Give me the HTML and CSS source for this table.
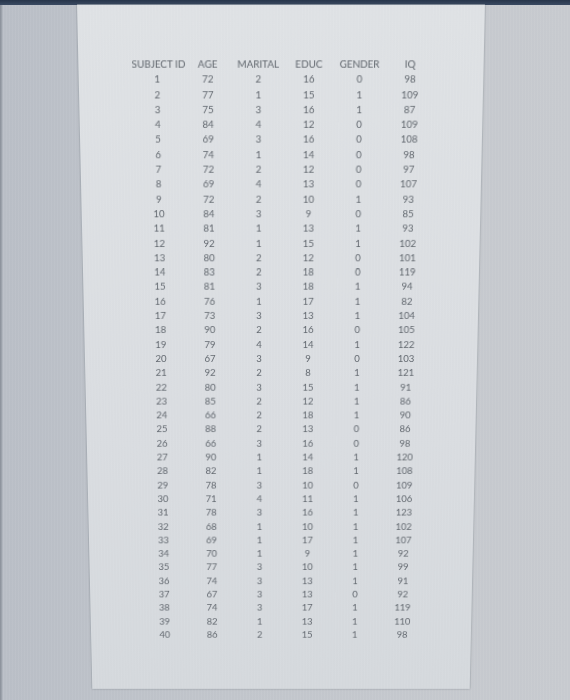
FILE: index.html
```html
<!DOCTYPE html>
<html lang="en">
<head>
<meta charset="utf-8">
<title>Subject data</title>
<link rel="stylesheet" href="styles.css">
</head>
<body>
<div class="topbar"></div>
<div class="stage">
  <div class="page">
    <div class="sheet">
      <div class="row head"><span>SUBJECT ID</span><span>AGE</span><span>MARITAL</span><span>EDUC</span><span>GENDER</span><span>IQ</span></div>
      <div class="row"><span>1</span><span>72</span><span>2</span><span>16</span><span>0</span><span>98</span></div>
      <div class="row"><span>2</span><span>77</span><span>1</span><span>15</span><span>1</span><span>109</span></div>
      <div class="row"><span>3</span><span>75</span><span>3</span><span>16</span><span>1</span><span>87</span></div>
      <div class="row"><span>4</span><span>84</span><span>4</span><span>12</span><span>0</span><span>109</span></div>
      <div class="row"><span>5</span><span>69</span><span>3</span><span>16</span><span>0</span><span>108</span></div>
      <div class="row"><span>6</span><span>74</span><span>1</span><span>14</span><span>0</span><span>98</span></div>
      <div class="row"><span>7</span><span>72</span><span>2</span><span>12</span><span>0</span><span>97</span></div>
      <div class="row"><span>8</span><span>69</span><span>4</span><span>13</span><span>0</span><span>107</span></div>
      <div class="row"><span>9</span><span>72</span><span>2</span><span>10</span><span>1</span><span>93</span></div>
      <div class="row"><span>10</span><span>84</span><span>3</span><span>9</span><span>0</span><span>85</span></div>
      <div class="row"><span>11</span><span>81</span><span>1</span><span>13</span><span>1</span><span>93</span></div>
      <div class="row"><span>12</span><span>92</span><span>1</span><span>15</span><span>1</span><span>102</span></div>
      <div class="row"><span>13</span><span>80</span><span>2</span><span>12</span><span>0</span><span>101</span></div>
      <div class="row"><span>14</span><span>83</span><span>2</span><span>18</span><span>0</span><span>119</span></div>
      <div class="row"><span>15</span><span>81</span><span>3</span><span>18</span><span>1</span><span>94</span></div>
      <div class="row"><span>16</span><span>76</span><span>1</span><span>17</span><span>1</span><span>82</span></div>
      <div class="row"><span>17</span><span>73</span><span>3</span><span>13</span><span>1</span><span>104</span></div>
      <div class="row"><span>18</span><span>90</span><span>2</span><span>16</span><span>0</span><span>105</span></div>
      <div class="row"><span>19</span><span>79</span><span>4</span><span>14</span><span>1</span><span>122</span></div>
      <div class="row"><span>20</span><span>67</span><span>3</span><span>9</span><span>0</span><span>103</span></div>
      <div class="row"><span>21</span><span>92</span><span>2</span><span>8</span><span>1</span><span>121</span></div>
      <div class="row"><span>22</span><span>80</span><span>3</span><span>15</span><span>1</span><span>91</span></div>
      <div class="row"><span>23</span><span>85</span><span>2</span><span>12</span><span>1</span><span>86</span></div>
      <div class="row"><span>24</span><span>66</span><span>2</span><span>18</span><span>1</span><span>90</span></div>
      <div class="row"><span>25</span><span>88</span><span>2</span><span>13</span><span>0</span><span>86</span></div>
      <div class="row"><span>26</span><span>66</span><span>3</span><span>16</span><span>0</span><span>98</span></div>
      <div class="row"><span>27</span><span>90</span><span>1</span><span>14</span><span>1</span><span>120</span></div>
      <div class="row"><span>28</span><span>82</span><span>1</span><span>18</span><span>1</span><span>108</span></div>
      <div class="row"><span>29</span><span>78</span><span>3</span><span>10</span><span>0</span><span>109</span></div>
      <div class="row"><span>30</span><span>71</span><span>4</span><span>11</span><span>1</span><span>106</span></div>
      <div class="row"><span>31</span><span>78</span><span>3</span><span>16</span><span>1</span><span>123</span></div>
      <div class="row"><span>32</span><span>68</span><span>1</span><span>10</span><span>1</span><span>102</span></div>
      <div class="row"><span>33</span><span>69</span><span>1</span><span>17</span><span>1</span><span>107</span></div>
      <div class="row"><span>34</span><span>70</span><span>1</span><span>9</span><span>1</span><span>92</span></div>
      <div class="row"><span>35</span><span>77</span><span>3</span><span>10</span><span>1</span><span>99</span></div>
      <div class="row"><span>36</span><span>74</span><span>3</span><span>13</span><span>1</span><span>91</span></div>
      <div class="row"><span>37</span><span>67</span><span>3</span><span>13</span><span>0</span><span>92</span></div>
      <div class="row"><span>38</span><span>74</span><span>3</span><span>17</span><span>1</span><span>119</span></div>
      <div class="row"><span>39</span><span>82</span><span>1</span><span>13</span><span>1</span><span>110</span></div>
      <div class="row"><span>40</span><span>86</span><span>2</span><span>15</span><span>1</span><span>98</span></div>
    </div>
  </div>
</div>
</body>
</html>
```

FILE: styles.css
```css
html, body {
  margin: 0;
  padding: 0;
}
body {
  width: 570px;
  height: 700px;
  overflow: hidden;
  font-family: Lato, "Liberation Sans", sans-serif;
  background:
    repeating-linear-gradient(90deg, rgba(255,255,255,0.05) 0 1px, rgba(0,0,0,0) 1px 3px),
    linear-gradient(90deg, #7f8690 0, #b9bec6 3px, #c1c5cb 40%, #c7cacf 100%);
  display: flex;
  flex-direction: column;
}
.topbar {
  height: 5px;
  flex: none;
  background: linear-gradient(180deg, #27354a, #3a4a62);
}
.stage {
  flex: none;
  padding-top: 12px;
  padding-left: 85px;
}
.page {
  width: 392px;
  height: 686px;
  background:
    repeating-linear-gradient(90deg, rgba(255,255,255,0.06) 0 1px, rgba(0,0,0,0) 1px 3px),
    linear-gradient(180deg, #dee1e4 0%, #d9dce0 60%, #d4d8dc 100%);
  box-shadow: 0 0 2px rgba(60,70,80,0.45);
  transform-origin: 50% 50%;
  transform: perspective(800px) rotateX(-5.2deg);
  display: flex;
  justify-content: center;
  padding-top: 49px;
  padding-left: 5px;
  box-sizing: border-box;
}
.sheet {
  width: 294px;
  color: #62686f;
  font-size: 9.6px;
}
.row {
  display: grid;
  grid-template-columns: repeat(6, 49px);
  height: 14.3px;
  line-height: 14.3px;
  text-align: center;
  white-space: nowrap;
}
.row span {
  display: block;
}
.head {
  color: #5f656c;
}
```
